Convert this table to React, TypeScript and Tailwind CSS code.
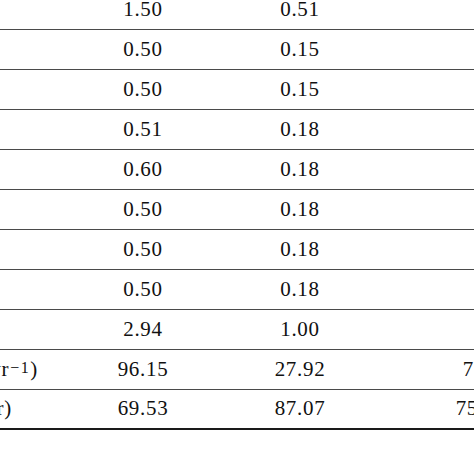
const rows = [
  { label: "Water use", a: "1.50", b: "0.51", c: "0.52" },
  { label: "Labour", a: "0.50", b: "0.15", c: "0.15" },
  { label: "Seed", a: "0.50", b: "0.15", c: "0.15" },
  { label: "Fertiliser", a: "0.51", b: "0.18", c: "0.18" },
  { label: "Pesticide", a: "0.60", b: "0.18", c: "0.18" },
  { label: "Machinery", a: "0.50", b: "0.18", c: "0.18" },
  { label: "Fuel", a: "0.50", b: "0.18", c: "0.18" },
  { label: "Transport", a: "0.50", b: "0.18", c: "0.18" },
  { label: "Total", a: "2.94", b: "1.00", c: "1.00" },
];

const cell = "flex items-center justify-center";
const grid = "grid h-[40px] grid-cols-[86px_114px_200px_180px]";

const App = () => {
  return (
    <div className="h-[474px] w-[474px] overflow-hidden bg-white font-['Liberation_Serif',serif] text-[#111]">
      <div className="-mt-[10px] w-[580px] text-[21px] tracking-[0.7px]">
        {rows.map((r) => (
          <div key={r.label} className={`${grid} border-b-[1.5px] border-[#4a4a4a]`}>
            <div className="flex items-center justify-end overflow-hidden whitespace-nowrap pr-[92px]">{r.label}</div>
            <div className={cell}>{r.a}</div>
            <div className={cell}>{r.b}</div>
            <div className={`${cell} pl-[16px]`}>{r.c}</div>
          </div>
        ))}
        <div className={`${grid} border-b-[1.5px] border-[#4a4a4a]`}>
          <div className="flex items-center justify-end whitespace-nowrap pr-[48px]">
            <span>
              (t yr<sup className="relative -top-[3px] ml-[1px] text-[16px] tracking-[1.5px]">−1</sup>)
            </span>
          </div>
          <div className={cell}>96.15</div>
          <div className={cell}>27.92</div>
          <div className={`${cell} pr-[4px]`}>77.41</div>
        </div>
        <div className={`${grid} border-b-[2.5px] border-[#1a1a1a]`}>
          <div className="flex items-center justify-end whitespace-nowrap pr-[74px]">(% yr)</div>
          <div className={cell}>69.53</div>
          <div className={cell}>87.07</div>
          <div className={`${cell} pr-[18px]`}>75.38</div>
        </div>
      </div>
    </div>
  );
};

export default App;
